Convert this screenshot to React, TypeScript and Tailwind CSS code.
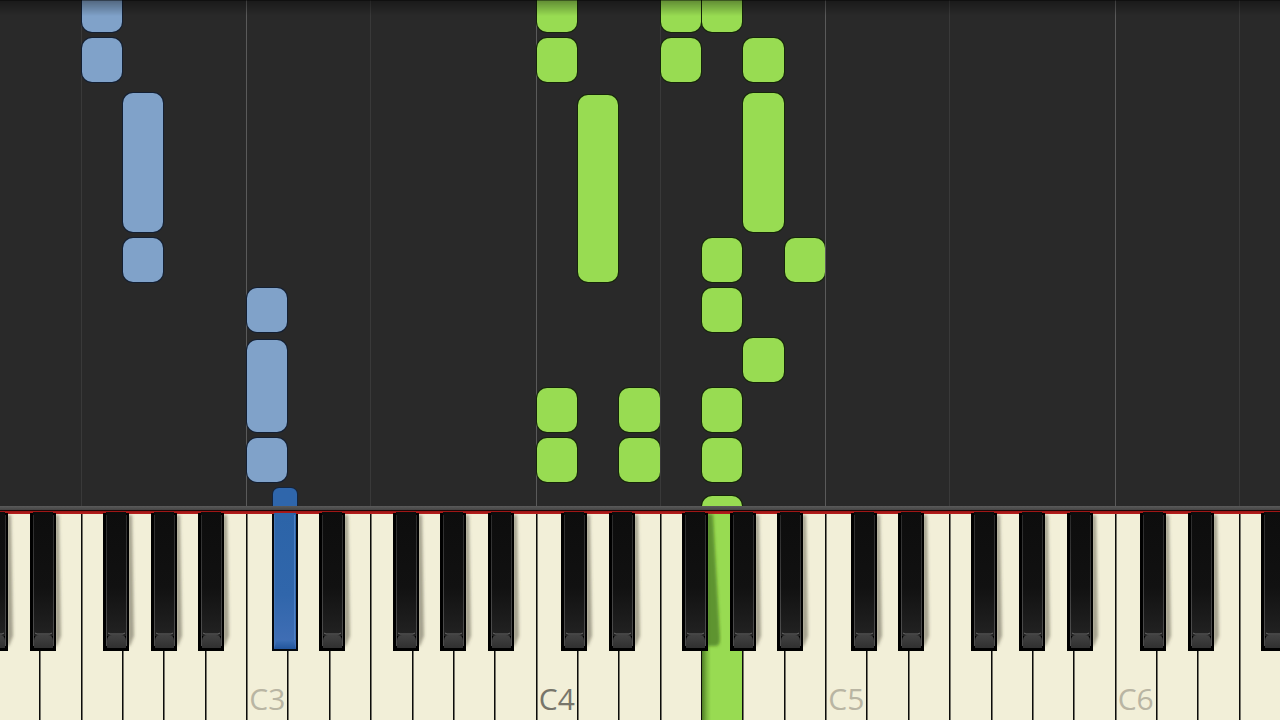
import clsx from 'clsx'

type Note = { key: number; bottom: number; height: number; hand: 'left' | 'right'; sharp?: boolean }

// key = index of the white key counted from D2, bottom = distance to the hit line
const notes: Note[] = [
  { key: 2, bottom: 474, height: 60, hand: 'left' },
  { key: 2, bottom: 424, height: 44, hand: 'left' },
  { key: 3, bottom: 274, height: 139, hand: 'left' },
  { key: 3, bottom: 224, height: 44, hand: 'left' },
  { key: 6, bottom: 174, height: 44, hand: 'left' },
  { key: 6, bottom: 74, height: 92, hand: 'left' },
  { key: 6, bottom: 24, height: 44, hand: 'left' },
  { key: 6, bottom: -20, height: 38, hand: 'left', sharp: true },
  { key: 13, bottom: 474, height: 60, hand: 'right' },
  { key: 16, bottom: 474, height: 60, hand: 'right' },
  { key: 17, bottom: 474, height: 60, hand: 'right' },
  { key: 13, bottom: 424, height: 44, hand: 'right' },
  { key: 16, bottom: 424, height: 44, hand: 'right' },
  { key: 18, bottom: 424, height: 44, hand: 'right' },
  { key: 14, bottom: 224, height: 187, hand: 'right' },
  { key: 18, bottom: 274, height: 139, hand: 'right' },
  { key: 17, bottom: 224, height: 44, hand: 'right' },
  { key: 19, bottom: 224, height: 44, hand: 'right' },
  { key: 17, bottom: 174, height: 44, hand: 'right' },
  { key: 18, bottom: 124, height: 44, hand: 'right' },
  { key: 13, bottom: 74, height: 44, hand: 'right' },
  { key: 15, bottom: 74, height: 44, hand: 'right' },
  { key: 17, bottom: 74, height: 44, hand: 'right' },
  { key: 13, bottom: 24, height: 44, hand: 'right' },
  { key: 15, bottom: 24, height: 44, hand: 'right' },
  { key: 17, bottom: 24, height: 44, hand: 'right' },
  { key: 17, bottom: -34, height: 44, hand: 'right' },
]

const letters = ['C', 'D', 'E', 'F', 'G', 'A', 'B']

const sharpOffset: Record<string, string> = {
  C: 'left-[62%]',
  D: 'left-[77%]',
  F: 'left-[54%]',
  G: 'left-[69%]',
  A: 'left-[84%]',
}

const keys = Array.from({ length: 31 }, (_, index) => ({
  index,
  letter: letters[(index + 1) % 7],
  octave: 2 + Math.floor((index + 1) / 7),
}))

const PRESSED_WHITE = 'G4'
const PRESSED_BLACK = 'C#3'

function Defs() {
  return (
    <svg className="absolute size-0" aria-hidden="true">
      <defs>
        <linearGradient id="ebony" x1="0" y1="0" x2="0" y2="1">
          <stop offset="0" stopColor="#0d0d0d" />
          <stop offset="0.6" stopColor="#111111" />
          <stop offset="1" stopColor="#222222" />
        </linearGradient>
        <linearGradient id="edge" x1="0" y1="0" x2="0" y2="1">
          <stop offset="0" stopColor="#2b2b2b" />
          <stop offset="1" stopColor="#505050" />
        </linearGradient>
        <linearGradient id="lip" x1="0" y1="0" x2="0" y2="1">
          <stop offset="0" stopColor="#424242" />
          <stop offset="1" stopColor="#303030" />
        </linearGradient>
        <linearGradient id="blue" x1="0" y1="0" x2="0" y2="1">
          <stop offset="0" stopColor="#2c64a8" />
          <stop offset="0.6" stopColor="#3066ab" />
          <stop offset="1" stopColor="#426fb6" />
        </linearGradient>
        <linearGradient id="blueLip" x1="0" y1="0" x2="0" y2="1">
          <stop offset="0" stopColor="#3f72b8" />
          <stop offset="1" stopColor="#22559c" />
        </linearGradient>
        <filter id="soft" x="-50%" y="-5%" width="200%" height="110%">
          <feGaussianBlur stdDeviation="1.5" />
        </filter>
      </defs>
    </svg>
  )
}

function BlackKeyFace({ pressed, deepShadow }: { pressed: boolean; deepShadow: boolean }) {
  if (pressed) {
    return (
      <svg viewBox="0 0 40 140" className="block h-[140px] w-[40px]" aria-hidden="true">
        <rect y="2" width="26" height="137" fill="#05080c" />
        <rect x="2" y="1" width="22" height="136" fill="url(#blue)" />
        <path d="M2.5 3V134" stroke="#4375b4" />
        <path d="M22.5 3V128" stroke="#4f82c2" />
        <path d="M2 137L5 127Q13 130 21 127L24 137Z" fill="url(#blueLip)" />
      </svg>
    )
  }
  return (
    <svg viewBox="0 0 40 140" className="block h-[140px] w-[40px]" aria-hidden="true">
      {deepShadow ? (
        <path d="M25 2H31L38 126Q38 134 34 134H25Z" fill="#315a10" fillOpacity="0.55" filter="url(#soft)" />
      ) : (
        <path d="M25 3H29L31 124L27 134H25Z" fill="#55523f" fillOpacity="0.5" filter="url(#soft)" />
      )}
      <rect y="1" width="26" height="138" fill="#000" />
      <rect x="3" width="20" height="124" fill="url(#ebony)" />
      <path d="M3 3H4V134H3Z" fill="url(#edge)" />
      <path d="M23 3H24V134H23Z" fill="url(#edge)" />
      <path d="M4 136V129Q4 123 9 123H18Q23 123 23 129V136Z" fill="url(#lip)" />
      <path d="M5 121L7 122H20L22 121" stroke="#6a6a6a" fill="none" />
    </svg>
  )
}

function BlackKey({ name, className }: { name: string; className: string }) {
  return (
    <button
      type="button"
      aria-label={name}
      aria-pressed={name === PRESSED_BLACK}
      className={clsx('absolute -top-0.5 z-10 h-[140px] w-[26px]', className)}
    >
      <BlackKeyFace pressed={name === PRESSED_BLACK} deepShadow={name === 'F#4'} />
    </button>
  )
}

function NoteRoll() {
  return (
    <section
      aria-label="Notes"
      className="relative -ml-0.5 grid min-h-[506px] flex-1 grid-cols-[repeat(31,minmax(0,1fr))] overflow-hidden bg-[#292929]"
    >
      {keys.map(({ index, letter }) => (
        <div
          key={index}
          className={clsx(
            'relative',
            letter === 'C' && 'border-l border-[#5a5a5a]',
            letter === 'F' && 'border-l border-[#393939]',
            letter !== 'C' && letter !== 'F' && 'border-l border-transparent',
          )}
        >
          {notes
            .filter((n) => n.key === index)
            .map((n) => (
              <div
                key={n.bottom}
                className={clsx(
                  'absolute',
                  n.sharp
                    ? 'left-[64%] w-6 rounded-md bg-[#2f66ab] shadow-[0_0_0_1px_#14243c]'
                    : 'left-0 right-0 rounded-[10px]',
                  !n.sharp && n.hand === 'left' && 'bg-[#80a2c9] shadow-[0_0_0_1px_#131f32]',
                  n.hand === 'right' && 'bg-[#98dc52] shadow-[0_0_0_1px_#15260a]',
                )}
                style={{ bottom: n.bottom, height: n.height }}
              />
            ))}
        </div>
      ))}
      <div className="absolute inset-x-0 top-0 h-4 border-t border-black/60 bg-linear-to-b from-black/35 to-transparent" />
    </section>
  )
}

function Keyboard() {
  return (
    <section
      aria-label="Keyboard"
      className="-ml-0.5 grid h-[206px] grid-cols-[repeat(31,minmax(0,1fr))] bg-[#f2efd8]"
    >
      {keys.map(({ index, letter, octave }) => {
        const name = `${letter}${octave}`
        const pressed = name === PRESSED_WHITE
        return (
          <div key={name} className="relative">
            <button
              type="button"
              aria-label={name}
              aria-pressed={pressed}
              className={clsx(
                'flex h-full w-full items-end justify-center border-l border-[#0c0c0a] font-["Open_Sans",sans-serif] text-[30px] leading-[42px]',
                pressed
                  ? 'bg-[linear-gradient(to_right,#4f7d26,#7fbb42_5px,#98db52_9px)]'
                  : 'bg-[#f2efd8] shadow-[inset_1px_0_0_#77756a]',
                octave === 4 ? 'text-[#77756a]' : 'text-[#b9b5a3]',
              )}
            >
              {letter === 'C' && name}
            </button>
            {index === 0 && <BlackKey name="C#2" className="left-[-39%]" />}
            {sharpOffset[letter] && (
              <BlackKey name={`${letter}#${octave}`} className={sharpOffset[letter]} />
            )}
          </div>
        )
      })}
    </section>
  )
}

export default function App() {
  return (
    <main className="flex min-h-screen flex-col overflow-hidden bg-[#292929]">
      <Defs />
      <NoteRoll />
      <div className="h-1 bg-linear-to-b from-[#5a5a5a] to-[#444444]" />
      <div className="h-px bg-[#1c0808]" />
      <div className="h-[3px] bg-linear-to-b from-[#9a1414] to-[#b81e1c]" />
      <Keyboard />
    </main>
  )
}
